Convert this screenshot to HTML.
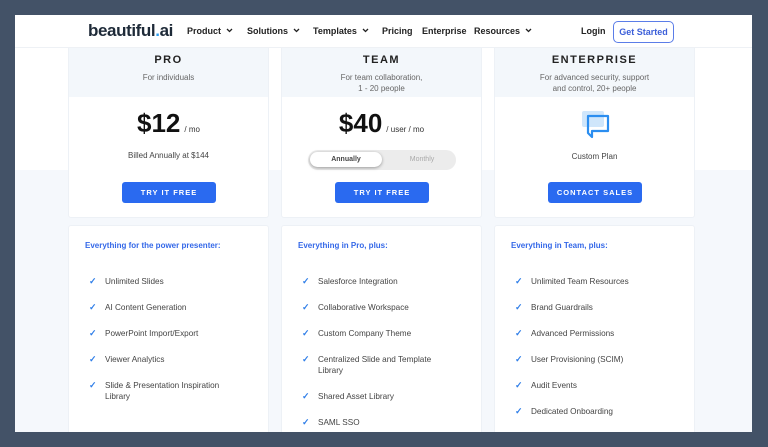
<!DOCTYPE html>
<html><head><style>
*{margin:0;padding:0;box-sizing:border-box}
body{width:768px;height:447px;background:#435267;font-family:"Liberation Sans",sans-serif;position:relative;overflow:hidden}
.frame{position:absolute;left:15px;top:15px;width:737px;height:417px;background:#fff;overflow:hidden}
.lbg{position:absolute;left:0;top:155px;width:737px;height:262px;background:#f5f8fc}
.nav{position:absolute;left:0;top:0;width:737px;height:33px;background:#fff;border-bottom:1px solid #eef1f5;z-index:3}
.logo{position:absolute;left:73px;top:6px;font-size:17px;font-weight:bold;color:#1e2a38;letter-spacing:-0.4px}
.logo span{color:#2f9ef0}
.ni{position:absolute;top:11px;font-size:9px;font-weight:bold;color:#222;white-space:nowrap}
.ni svg{margin-left:5px;vertical-align:1px}
.btn2{position:absolute;left:598px;top:6px;width:61px;height:22px;border:1px solid #5b7de8;border-radius:5px;color:#3c5fd9;font-size:9px;font-weight:bold;text-align:center;line-height:20px}
.card{position:absolute;background:#fff;border:1px solid #edf1f6;border-radius:3px}
.hd{position:absolute;left:0;top:0;width:100%;background:#f3f7fb;text-align:center}
.ttl{font-size:11px;font-weight:bold;letter-spacing:1.5px;color:#222;margin-top:6px}
.sub{font-size:8px;color:#666;line-height:11px;margin-top:6px}
.price{position:absolute;width:100%;text-align:center;font-size:26px;font-weight:bold;color:#111}
.price small{font-size:8px;font-weight:normal;color:#333;margin-left:4px}
.b{position:absolute;height:21px;width:94px;background:#2a6af0;border-radius:3px;color:#fff;font-size:7.5px;font-weight:bold;letter-spacing:1px;text-align:center;line-height:21px}
.note{position:absolute;width:100%;text-align:center;font-size:8px;color:#444}
.fh{position:absolute;left:16px;top:15px;font-size:8px;font-weight:bold;color:#3468e8}
ul{position:absolute;left:20px;top:50px;list-style:none}
li{font-size:8.2px;color:#444;line-height:11px;margin-bottom:15px;padding-left:16px;position:relative;width:150px}
li:before{content:"✓";position:absolute;left:0;top:0;color:#2f7ee8;font-size:9px;font-weight:bold}
</style></head><body>
<div class="frame">
<div class="lbg"></div>
<div class="nav">
<div class="logo">beautiful<span>.</span>ai</div>
<div class="ni" style="left:172px">Product<svg width="7" height="5" viewBox="0 0 7 5"><path d="M1 1l2.5 2.5L6 1" fill="none" stroke="#222" stroke-width="1.3"/></svg></div>
<div class="ni" style="left:232px">Solutions<svg width="7" height="5" viewBox="0 0 7 5"><path d="M1 1l2.5 2.5L6 1" fill="none" stroke="#222" stroke-width="1.3"/></svg></div>
<div class="ni" style="left:298px">Templates<svg width="7" height="5" viewBox="0 0 7 5"><path d="M1 1l2.5 2.5L6 1" fill="none" stroke="#222" stroke-width="1.3"/></svg></div>
<div class="ni" style="left:367px">Pricing</div>
<div class="ni" style="left:407px">Enterprise</div>
<div class="ni" style="left:459px">Resources<svg width="7" height="5" viewBox="0 0 7 5"><path d="M1 1l2.5 2.5L6 1" fill="none" stroke="#222" stroke-width="1.3"/></svg></div>
<div class="ni" style="left:566px">Login</div>
<div class="btn2">Get Started</div>
</div>

<div class="card" style="left:53px;top:28px;width:201px;height:175px">
<div class="hd" style="height:53px;padding-top:4px"><div class="ttl">PRO</div><div class="sub">For individuals</div></div>
<div class="price" style="top:64px">$12<small>/ mo</small></div>
<div class="note" style="top:107px">Billed Annually at $144</div>
<div class="b" style="left:53px;top:138px">TRY IT FREE</div>
</div>
<div class="card" style="left:266px;top:28px;width:201px;height:175px">
<div class="hd" style="height:53px;padding-top:4px"><div class="ttl">TEAM</div><div class="sub">For team collaboration,<br>1 - 20 people</div></div>
<div class="price" style="top:64px">$40<small>/ user / mo</small></div>
<div style="position:absolute;left:26px;top:106px;width:148px;height:20px;background:#ececec;border-radius:10px"></div>
<div style="position:absolute;left:28px;top:108px;width:72px;height:15px;background:#fff;border-radius:8px;box-shadow:0 1px 3px rgba(0,0,0,.35);font-size:7px;font-weight:bold;color:#444;text-align:center;line-height:15px">Annually</div>
<div style="position:absolute;left:110px;top:108px;width:60px;font-size:7px;color:#aaa;text-align:center;line-height:15px">Monthly</div>
<div class="b" style="left:53px;top:138px">TRY IT FREE</div>
</div>
<div class="card" style="left:479px;top:28px;width:201px;height:175px">
<div class="hd" style="height:53px;padding-top:4px"><div class="ttl">ENTERPRISE</div><div class="sub">For advanced security, support<br>and control, 20+ people</div></div>
<svg style="position:absolute;left:86px;top:66px" width="30" height="30" viewBox="0 0 30 30"><rect x="1" y="1" width="22" height="16" rx="2" fill="#cfe6fb"/><path d="M7 6h20v15H11v6l-4-4z" fill="none" stroke="#2b8ef0" stroke-width="2.2" stroke-linejoin="round"/></svg>
<div class="note" style="top:108px">Custom Plan</div>
<div class="b" style="left:53px;top:138px">CONTACT SALES</div>
</div>

<div class="card" style="left:53px;top:210px;width:201px;height:220px">
<div class="fh">Everything for the power presenter:</div>
<ul><li>Unlimited Slides</li><li>AI Content Generation</li><li>PowerPoint Import/Export</li><li>Viewer Analytics</li><li>Slide &amp; Presentation Inspiration Library</li></ul>
</div>
<div class="card" style="left:266px;top:210px;width:201px;height:220px">
<div class="fh">Everything in Pro, plus:</div>
<ul><li>Salesforce Integration</li><li>Collaborative Workspace</li><li>Custom Company Theme</li><li>Centralized Slide and Template Library</li><li>Shared Asset Library</li><li>SAML SSO</li></ul>
</div>
<div class="card" style="left:479px;top:210px;width:201px;height:220px">
<div class="fh">Everything in Team, plus:</div>
<ul><li>Unlimited Team Resources</li><li>Brand Guardrails</li><li>Advanced Permissions</li><li>User Provisioning (SCIM)</li><li>Audit Events</li><li>Dedicated Onboarding</li></ul>
</div>
</div>
</body></html>
